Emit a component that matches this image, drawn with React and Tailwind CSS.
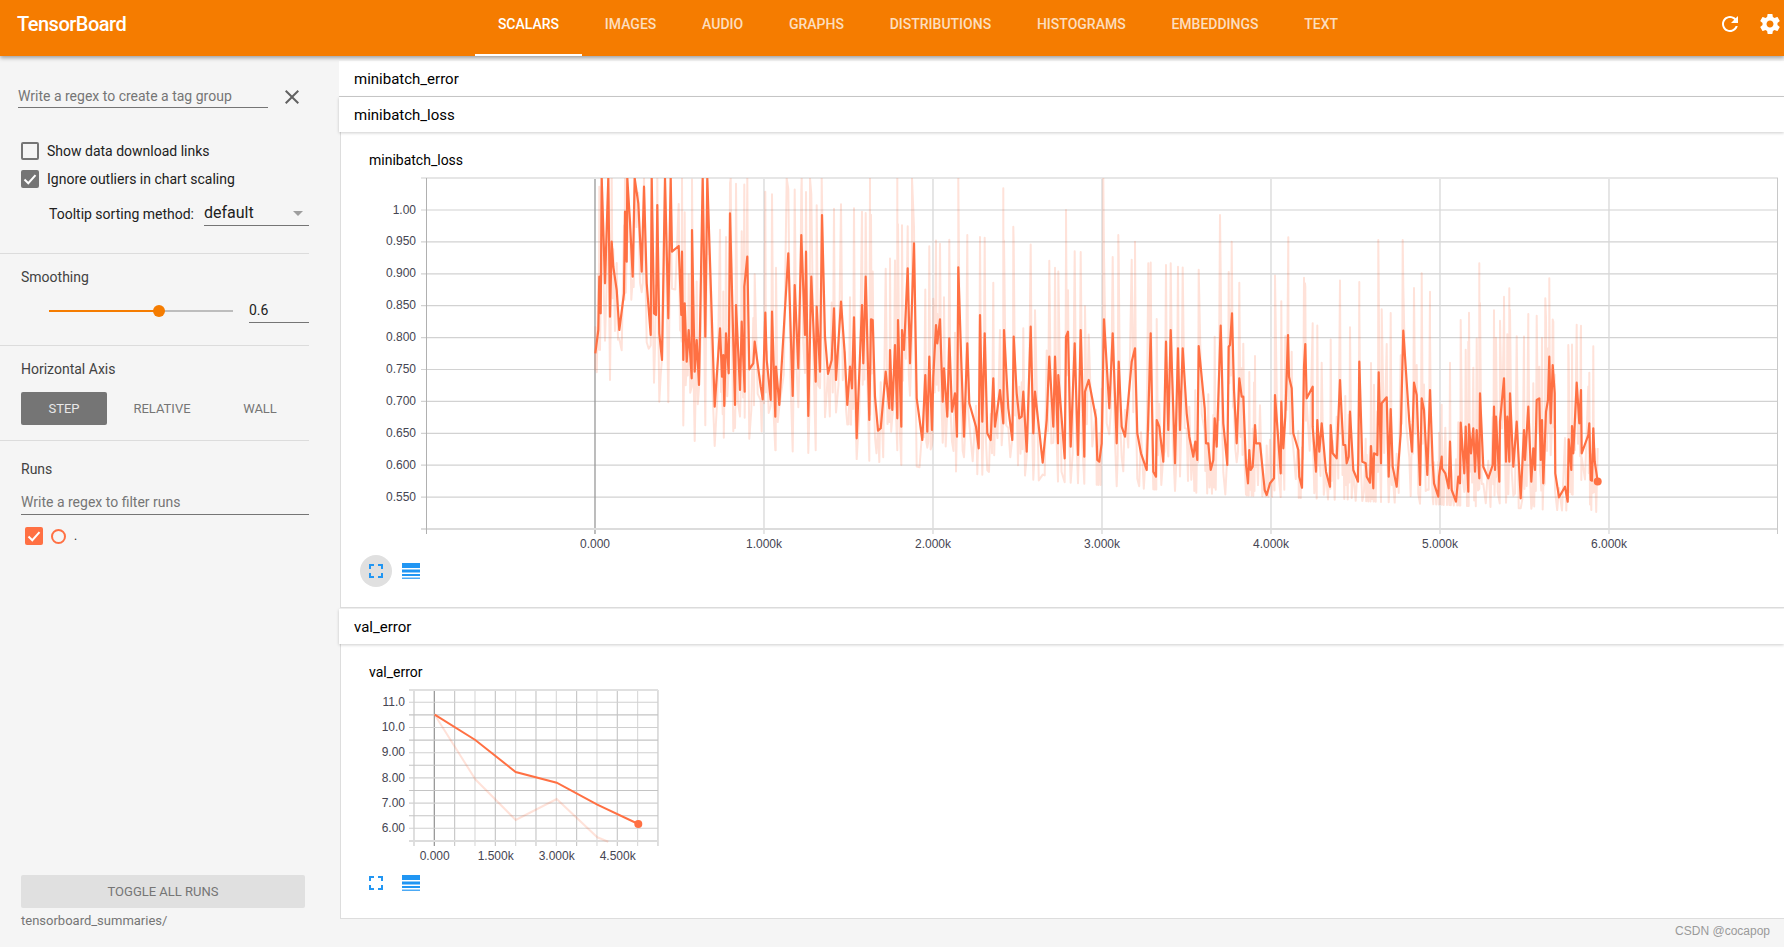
const LOSS_A = [[766,580],[775,510],[778,350],[782,460],[785,55],[795,370],[805,55],[810,470],[815,245],[820,320],[830,390],[838,510],[852,400],[855,155],[860,305],[862,55],[870,185],[878,350],[884,55],[895,130],[905,335],[912,80],[920,370],[932,525],[935,55],[942,460],[948,465],[952,135],[958,520],[966,600],[975,55],[985,475],[992,55],[996,275],[1016,258],[1024,465],[1026,275],[1030,600],[1034,430],[1040,605],[1046,510],[1055,655],[1056,210],[1064,635],[1070,540],[1077,675],[1088,55],[1096,530],[1102,55],[1108,240],[1124,740],[1140,505],[1146,650],[1150,585],[1153,738],[1158,520],[1166,640],[1170,160],[1180,545],[1185,735],[1188,435],[1200,690],[1205,485],[1214,695],[1213,380],[1222,290],[1228,628],[1240,610],[1244,545],[1262,680],[1268,718],[1276,458],[1280,600],[1292,720],[1296,455],[1306,770],[1308,620],[1318,735],[1345,280],[1358,708],[1364,375],[1375,625],[1384,225],[1395,525],[1398,275],[1405,768],[1414,350],[1427,665],[1430,440],[1440,635],[1446,165],[1455,530],[1464,642],[1475,600],[1482,445],[1488,660]]
const LOSS_B = [[3,425],[14,580],[22,735],[30,620],[36,685],[42,472],[50,835],[66,435],[70,610],[77,350],[88,780],[93,478],[98,480],[105,710],[114,812],[122,805],[137,635],[148,745],[150,570],[157,750],[165,555],[172,775],[174,480],[184,800],[186,510],[192,570],[203,325],[210,610],[222,250],[230,715],[247,840],[256,645],[262,815],[268,590],[276,810],[280,650],[288,495],[292,550],[300,478],[308,725],[312,625],[322,770],[328,535],[336,755],[345,700],[351,830],[355,322],[364,605],[372,830],[382,550],[388,730],[408,800],[416,865],[420,465],[427,785],[434,520],[442,820],[452,840],[460,655],[465,800],[480,690],[490,790],[492,510],[505,745],[517,840],[521,530],[530,700],[538,775],[545,770],[550,695],[560,875],[572,500],[580,820],[585,695],[608,908],[620,780],[628,590],[640,800],[645,590],[654,850],[655,645],[674,895],[678,530],[684,515],[692,860],[704,550],[714,885],[722,510],[733,890],[735,695],[746,660],[768,775],[772,900],[778,905],[785,850],[792,478],[808,745],[818,520],[830,850],[836,605],[845,800],[855,830],[875,605],[885,565],[892,820],[903,880],[920,930],[932,520],[940,935],[948,950],[950,780],[958,800],[970,905],[978,545],[985,810],[992,510],[1005,910],[1014,565],[1020,810],[1028,565],[1040,760],[1048,830],[1060,890],[1066,845],[1072,900],[1076,558],[1094,745],[1098,850],[1105,850],[1112,930],[1120,900],[1124,775],[1130,860],[1142,497],[1150,790],[1162,915],[1166,560],[1170,555],[1176,460],[1182,690],[1190,850],[1198,655],[1205,710],[1210,710],[1218,915],[1224,970],[1228,870],[1232,930],[1238,920],[1242,855],[1245,795],[1248,850],[1260,850],[1274,990],[1280,1005],[1290,970],[1302,955],[1305,705],[1322,940],[1324,725],[1330,865],[1336,770],[1344,525],[1347,650],[1355,685],[1360,820],[1375,870],[1378,950],[1386,983],[1392,620],[1396,552],[1400,715],[1418,680],[1418,800],[1428,935],[1432,780],[1438,875],[1445,790],[1458,935],[1470,980],[1472,795],[1478,880],[1490,895]]
const LOSS_C = [[120,420],[125,525],[130,615],[136,615],[140,670],[146,650],[150,515],[160,690],[174,725],[178,365],[187,665],[197,670],[200,710],[210,728],[213,618],[220,745],[222,640],[232,645],[236,397],[243,670],[245,490],[260,472],[266,710],[272,507],[278,680],[290,740],[302,580],[310,272],[328,545],[336,635],[342,428],[350,465],[360,735],[365,475],[372,510],[382,705],[390,450],[398,670],[402,730],[415,770],[417,710],[425,650],[426,685],[436,700],[446,745],[450,605],[455,750],[468,785],[475,710],[480,730],[482,548],[493,700],[497,560],[505,755],[507,553],[513,640],[520,565],[525,695],[530,570],[538,715],[540,460],[550,680],[565,715],[578,675],[582,500],[585,690],[588,530],[598,725],[600,545],[612,415],[618,665],[622,530],[628,665],[630,460],[640,680],[650,545],[662,775],[672,570],[675,660],[685,500],[694,725],[700,625],[705,690],[710,480],[718,475],[722,660],[726,540],[730,730],[738,515],[744,480],[748,350],[752,550],[758,375],[764,460],[766,700],[777,772],[795,740],[803,785],[806,598],[814,690],[816,558],[820,640],[830,428],[838,550],[843,450],[845,640],[865,585],[868,550],[872,720],[876,722],[880,565],[884,665],[893,724]]

const lossLine = [
  ...LOSS_A.map(([x, y]) => [340 + x / 3, 160 + y / 3]),
  ...LOSS_B.map(([x, y]) => [840 + x / 3, 160 + y / 3]),
  ...LOSS_C.map(([x, y]) => [1300 + x / 3, 240 + y / 3]),
]

// tall faint spikes read off the reference
const SPIKES = [
  ...[[1172, 55], [1222, 55], [1340, 55], [1385, 55], [1410, 55], [1445, 55]].map(([x, y]) => [340 + x / 3, 160 + y / 3]),
  ...[[42, 145], [90, 55], [172, 55], [216, 55], [355, 55], [490, 85], [520, 200], [678, 150], [790, 55], [835, 225], [885, 245], [925, 310], [992, 310], [1140, 165], [1175, 245], [1345, 232], [1395, 370]].map(([x, y]) => [840 + x / 3, 160 + y / 3]),
  ...[[15, 130], [178, 200], [235, 0], [308, 0], [365, 100], [390, 275], [505, 305], [538, 70], [612, 170], [628, 145], [685, 265], [736, 175], [748, 115], [760, 245], [805, 315], [830, 280], [842, 297], [880, 325]].map(([x, y]) => [1300 + x / 3, 240 + y / 3]),
]

const lerpAt = (pts, x) => {
  for (let i = 1; i < pts.length; i++) {
    if (x <= pts[i][0]) {
      const [a, b] = [pts[i - 1], pts[i]]
      return a[1] + ((b[1] - a[1]) * (x - a[0])) / (b[0] - a[0])
    }
  }
  return pts[pts.length - 1][1]
}
const FLOOR = [[595, 370], [640, 400], [700, 445], [800, 452], [1000, 477], [1200, 493], [1340, 500], [1600, 512]]
const CEIL = [[595, 170], [800, 190], [900, 225], [1000, 240], [1200, 270], [1400, 285], [1600, 330]]

// faint raw series: a denser zigzag round the smoothed line
const lossRaw = (() => {
  const out = []
  lossLine.forEach(([x, y], i) => {
    const prev = i ? lossLine[i - 1] : [x, y]
    const amp = 26 + ((i * 37) % 29)
    const up = y + (y - prev[1]) * 0.9 - amp
    const down = (y + prev[1]) / 2 + amp * 1.1
    out.push([(x + prev[0]) / 2, Math.min(lerpAt(FLOOR, x), Math.max(lerpAt(CEIL, x), down))])
    out.push([x, Math.min(lerpAt(FLOOR, x), Math.max(lerpAt(CEIL, x), up))])
  })
  SPIKES.forEach((s) => out.push(s))
  return out.sort((a, b) => a[0] - b[0])
})()

const toPts = (a) => a.map(([x, y]) => `${x.toFixed(1)},${y.toFixed(1)}`).join(' ')

const TABS = ['Scalars', 'Images', 'Audio', 'Graphs', 'Distributions', 'Histograms', 'Embeddings', 'Text']

function Icon({ d, className }) {
  return (
    <svg viewBox="0 0 24 24" className={className} fill="currentColor">
      <path d={d} />
    </svg>
  )
}

const FULLSCREEN = 'M7 14H5v5h5v-2H7v-3zm-2-4h2V7h3V5H5v5zm12 7h-3v2h5v-5h-2v3zM14 5v2h3v3h2V5h-5z'
const REFRESH = 'M17.65 6.35C16.2 4.9 14.21 4 12 4c-4.42 0-7.99 3.58-7.99 8s3.57 8 7.99 8c3.73 0 6.84-2.55 7.73-6h-2.08c-.82 2.33-3.04 4-5.65 4-3.31 0-6-2.69-6-6s2.69-6 6-6c1.66 0 3.14.69 4.22 1.78L13 11h7V4l-2.35 2.35z'
const GEAR = 'M19.43 12.98c.04-.32.07-.64.07-.98s-.03-.66-.07-.98l2.11-1.65c.19-.15.24-.42.12-.64l-2-3.46c-.12-.22-.39-.3-.61-.22l-2.49 1c-.52-.4-1.08-.73-1.69-.98l-.38-2.65C14.46 2.18 14.25 2 14 2h-4c-.25 0-.46.18-.49.42l-.38 2.65c-.61.25-1.17.59-1.69.98l-2.49-1c-.23-.09-.49 0-.61.22l-2 3.46c-.13.22-.07.49.12.64l2.11 1.65c-.04.32-.07.65-.07.98s.03.66.07.98l-2.11 1.65c-.19.15-.24.42-.12.64l2 3.46c.12.22.39.3.61.22l2.49-1c.52.4 1.08.73 1.69.98l.38 2.65c.03.24.24.42.49.42h4c.25 0 .46-.18.49-.42l.38-2.65c.61-.25 1.17-.59 1.69-.98l2.49 1c.23.09.49 0 .61-.22l2-3.46c.12-.22.07-.49-.12-.64l-2.11-1.65zM12 15.5c-1.93 0-3.5-1.57-3.5-3.5s1.57-3.5 3.5-3.5 3.5 1.57 3.5 3.5-1.57 3.5-3.5 3.5z'

function TableIcon() {
  return (
    <svg viewBox="0 0 18 16" className="w-[18px] h-4 text-[#2196f3]" fill="currentColor">
      <rect y="0" width="18" height="5" />
      <rect y="6.5" width="18" height="3" />
      <rect y="11" width="18" height="2" />
      <rect y="14.6" width="18" height="1.2" />
    </svg>
  )
}

function ChartTools({ active, className }) {
  return (
    <div className={`flex items-center ${className}`}>
      <div className={`w-8 h-8 rounded-full flex items-center justify-center ${active ? 'bg-[#e0e0e0]' : ''}`}>
        <Icon d={FULLSCREEN} className="w-6 h-6 text-[#2196f3]" />
      </div>
      <div className="ml-[10px]">
        <TableIcon />
      </div>
    </div>
  )
}

function LossChart() {
  const yTicks = ['1.00', '0.950', '0.900', '0.850', '0.800', '0.750', '0.700', '0.650', '0.600', '0.550']
  const xTicks = [0, 1, 2, 3, 4, 5, 6]
  return (
    <svg width="1443" height="382" viewBox="341 170 1443 382" className="block overflow-visible">
      <defs>
        <clipPath id="lossClip">
          <rect x="427" y="178" width="1351" height="351" />
        </clipPath>
      </defs>
      <g fontFamily="'Liberation Sans', sans-serif" fontSize="12" fill="#454552">
        {yTicks.map((t, i) => {
          const y = 210 + i * 31.9
          return (
            <g key={t}>
              <line x1="421" x2="1778" y1={y} y2={y} stroke="#d2d2d2" strokeWidth="1.2" />
              <text x="416" y={y + 3.5} textAnchor="end">{t}</text>
            </g>
          )
        })}
        {xTicks.map((k) => {
          const x = 595 + k * 169
          return (
            <g key={k}>
              <line x1={x} x2={x} y1="178" y2="534" stroke={k === 0 ? '#999999' : '#d8d8d8'} strokeWidth="1.3" />
              <text x={x} y="548" textAnchor="middle">{k === 0 ? '0.000' : `${k}.000k`}</text>
            </g>
          )
        })}
      </g>
      <line x1="421" x2="1778" y1="178" y2="178" stroke="#e6e6e6" strokeWidth="2" />
      <line x1="421" x2="1778" y1="529" y2="529" stroke="#dcdcdc" strokeWidth="2" />
      <line x1="426.5" x2="426.5" y1="178" y2="534" stroke="#b0b0b0" strokeWidth="1" />
      <line x1="1777.5" x2="1777.5" y1="178" y2="534" stroke="#c8c8c8" strokeWidth="1" />
      <g clipPath="url(#lossClip)" fill="none" strokeLinejoin="round">
        <polyline points={toPts(lossRaw)} stroke="#ff7043" strokeOpacity="0.2" strokeWidth="2" />
        <polyline points={toPts(lossLine)} stroke="#ff7043" strokeWidth="2.2" />
      </g>
      <circle cx="1597.7" cy="481.5" r="4" fill="#ff7043" />
    </svg>
  )
}

function ValChart() {
  const xs = Array.from({ length: 13 }, (_, i) => 414 + i * 20.33)
  const ys = Array.from({ length: 12 }, (_, i) => 702.3 + i * 12.6)
  const yLabels = ['11.0', '10.0', '9.00', '8.00', '7.00', '6.00']
  const xLabels = ['0.000', '1.500k', '3.000k', '4.500k']
  const smooth = [[284, 224], [406, 300], [527, 396], [650, 428], [772, 494], [895, 552]]
  const raw = [[284, 224], [406, 418], [527, 540], [650, 477], [772, 592], [805, 605]]
  const conv = (a) => a.map(([x, y]) => [340 + x / 3, 640 + y / 3])
  return (
    <svg width="340" height="180" viewBox="341 682 340 180" className="block overflow-visible">
      <g fontFamily="'Liberation Sans', sans-serif" fontSize="12" fill="#454552">
        {xs.map((x, i) => (
          <line key={x} x1={x} x2={x} y1="690" y2="846" stroke={i === 1 ? '#999999' : i % 2 === 1 ? '#d8d8d8' : '#c4c4c4'} strokeWidth={i === 1 ? 1.3 : 1.1} />
        ))}
        {ys.map((y, i) => (
          <line key={y} x1="409" x2="658" y1={y} y2={y} stroke={i % 2 ? '#c4c4c4' : '#d0d0d0'} strokeWidth="1.1" />
        ))}
        {yLabels.map((t, i) => (
          <text key={t} x="405" y={706 + i * 25.2} textAnchor="end">{t}</text>
        ))}
        {xLabels.map((t, i) => (
          <text key={t} x={434.7 + i * 61} y="860" textAnchor="middle">{t}</text>
        ))}
      </g>
      <line x1="409" x2="658" y1="690" y2="690" stroke="#e0e0e0" strokeWidth="2" />
      <line x1="409" x2="658" y1="841" y2="841" stroke="#dcdcdc" strokeWidth="2" />
      <polyline points={toPts(conv(raw))} fill="none" stroke="#ff7043" strokeOpacity="0.2" strokeWidth="2" />
      <polyline points={toPts(conv(smooth))} fill="none" stroke="#ff7043" strokeWidth="2" />
      <circle cx="638.3" cy="824" r="4" fill="#ff7043" />
    </svg>
  )
}

function Divider() {
  return <div className="h-px bg-[#dcdcdc] mr-[30px]" />
}

function PaneHeader({ children, className = '' }) {
  return (
    <div className={`bg-white pl-[15px] pt-[2px] flex items-center text-[15px] text-black ${className}`}>
      {children}
    </div>
  )
}

function Sidebar() {
  return (
    <aside className="w-[339px] shrink-0 flex flex-col text-[14px] bg-[#f5f5f5] text-[#212121]">
      <div className="pt-[30px] pl-[18px] pr-[30px] flex items-start">
        <div className="w-[250px] h-[22px] border-b border-[#757575] text-[#757575] leading-[20px]">
          Write a regex to create a tag group
        </div>
        <Icon d="M19 6.41 17.59 5 12 10.59 6.41 5 5 6.41 10.59 12 5 17.59 6.41 19 12 13.41 17.59 19 19 17.59 13.41 12z" className="w-6 h-6 ml-3 -mt-[1px] text-[#616161]" />
      </div>

      <div className="mt-[33px] pl-[21px] flex items-center h-[18px]">
        <div className="w-[18px] h-[18px] rounded-[2px] border-2 border-[#757575]" />
        <span className="ml-[8px]">Show data download links</span>
      </div>
      <div className="mt-[10px] pl-[21px] flex items-center h-[18px]">
        <div className="w-[18px] h-[18px] rounded-[2px] bg-[#757575] flex items-center justify-center">
          <svg viewBox="0 0 18 18" className="w-[18px] h-[18px]" fill="none" stroke="white" strokeWidth="2">
            <path d="M3.5 9.5l3.8 3.7 7.2-8" />
          </svg>
        </div>
        <span className="ml-[8px]">Ignore outliers in chart scaling</span>
      </div>
      <div className="mt-[11px] pl-[49px] pr-[30px] flex items-start">
        <span className="w-[155px] pt-[5px] leading-[20px]">Tooltip sorting method:</span>
        <div className="relative w-[105px] h-[27px] pt-[3px] border-b border-[#757575] text-[16px] leading-[22px]">
          default
          <span className="absolute right-[6px] top-[12px] w-0 h-0 border-x-[5px] border-x-transparent border-t-[5px] border-t-[#9e9e9e]" />
        </div>
      </div>

      <div className="mt-[27px]"><Divider /></div>

      <div className="pl-[21px] pt-[13px] text-[#424242] leading-[20px]">Smoothing</div>
      <div className="mt-[13px] pl-[49px] pr-[30px] flex items-start">
        <div className="relative w-[184px] h-[2px] bg-[#bdbdbd] mt-[10px]">
          <div className="h-[2px] w-[110px] bg-[#f57c00]" />
          <div className="absolute left-[104px] -top-[5px] w-3 h-3 rounded-full bg-[#f57c00]" />
        </div>
        <div className="ml-[16px] w-[60px] h-[23px] border-b border-[#757575] leading-[20px]">0.6</div>
      </div>

      <div className="mt-[22px]"><Divider /></div>

      <div className="pl-[21px] pt-[13px] text-[#424242] leading-[20px]">Horizontal Axis</div>
      <div className="mt-[13px] pl-[21px] flex items-center text-[13px] text-[#757575]">
        <div className="w-[86px] h-[33px] rounded-[2px] bg-[#757575] text-[#e8e8e8] flex items-center justify-center">STEP</div>
        <div className="w-[110px] text-center">RELATIVE</div>
        <div className="w-[86px] text-center">WALL</div>
      </div>

      <div className="mt-[15px]"><Divider /></div>

      <div className="pl-[21px] pt-[18px] text-[#424242] leading-[20px]">Runs</div>
      <div className="ml-[21px] mr-[30px] mt-[10px] h-[26px] pt-[2px] border-b border-[#757575] text-[#757575] leading-[22px]">
        Write a regex to filter runs
      </div>
      <div className="mt-[12px] pl-[25px] flex items-center">
        <div className="w-[18px] h-[18px] rounded-[2px] bg-[#ff7043]">
          <svg viewBox="0 0 18 18" className="w-[18px] h-[18px]" fill="none" stroke="white" strokeWidth="2">
            <path d="M3.5 9.5l3.8 3.7 7.2-8" />
          </svg>
        </div>
        <div className="ml-[8px] w-[15px] h-[15px] rounded-full border-2 border-[#ff7043]" />
        <span className="ml-[8px] text-[12px]">.</span>
      </div>

      <div className="mt-auto ml-[21px] w-[284px] h-[33px] rounded-[2px] bg-[#e0e0e0] text-[#757575] text-[13px] flex items-center justify-center">
        TOGGLE ALL RUNS
      </div>
      <div className="ml-[21px] mt-[3px] mb-[16px] text-[13px] text-[#757575] leading-[20px]">tensorboard_summaries/</div>
    </aside>
  )
}

export default function App() {
  return (
    <div className="relative w-[1784px] h-[947px] overflow-hidden flex flex-col bg-[#f5f5f5]" style={{ fontFamily: "Roboto, 'Noto Sans', sans-serif" }}>
      <header className="relative z-10 h-14 shrink-0 bg-[#f57c00] flex items-start text-white shadow-[0_2px_4px_rgba(0,0,0,0.35)]">
        <div className="pl-[17px] w-[475px] h-full pb-2 flex items-center text-[20px] font-medium tracking-[-0.5px]">TensorBoard</div>
        <nav className="flex h-full text-[14px] font-medium">
          {TABS.map((t, i) => (
            <div
              key={t}
              className={`h-full px-[22.9px] pb-[6px] flex items-center uppercase border-b-2 ${i === 0 ? 'border-white text-white' : 'border-transparent text-white/75'}`}
            >
              {t}
            </div>
          ))}
        </nav>
        <div className="ml-auto h-full pb-2 flex items-center pr-[2px]">
          <Icon d={REFRESH} className="w-6 h-6" />
          <Icon d={GEAR} className="w-6 h-6 ml-4" />
        </div>
      </header>

      <div className="flex flex-1 min-h-0">
        <Sidebar />
        <main className="flex-1 min-w-0 pt-[5px] flex flex-col">
          <PaneHeader className="h-[36px] border-b border-[#cccccc]">minibatch_error</PaneHeader>
          <PaneHeader className="h-[35px] relative shadow-[0_1px_3px_rgba(0,0,0,0.2)]">minibatch_loss</PaneHeader>
          <section className="h-[476px] ml-px bg-white border-l border-b border-[#dddddd] flex flex-col">
            <div className="pl-[28px] pt-[18px] text-[14px] leading-[20px] text-black">minibatch_loss</div>
            <LossChart />
            <ChartTools active className="pl-[19px] mt-[3px]" />
          </section>
          <PaneHeader className="h-[35px] mt-[1px] relative shadow-[0_1px_3px_rgba(0,0,0,0.2)]">val_error</PaneHeader>
          <section className="h-[275px] ml-px bg-white border-l border-b border-[#dddddd] flex flex-col">
            <div className="pl-[28px] pt-[18px] text-[14px] leading-[20px] text-black">val_error</div>
            <ValChart />
            <ChartTools className="pl-[19px] mt-[5px]" />
          </section>
          <div className="text-right pr-[14px] pt-[3px] text-[12px] text-[#9a9a9a]" style={{ fontFamily: "'Liberation Sans', sans-serif" }}>
            CSDN @cocapop
          </div>
        </main>
      </div>
    </div>
  )
}
